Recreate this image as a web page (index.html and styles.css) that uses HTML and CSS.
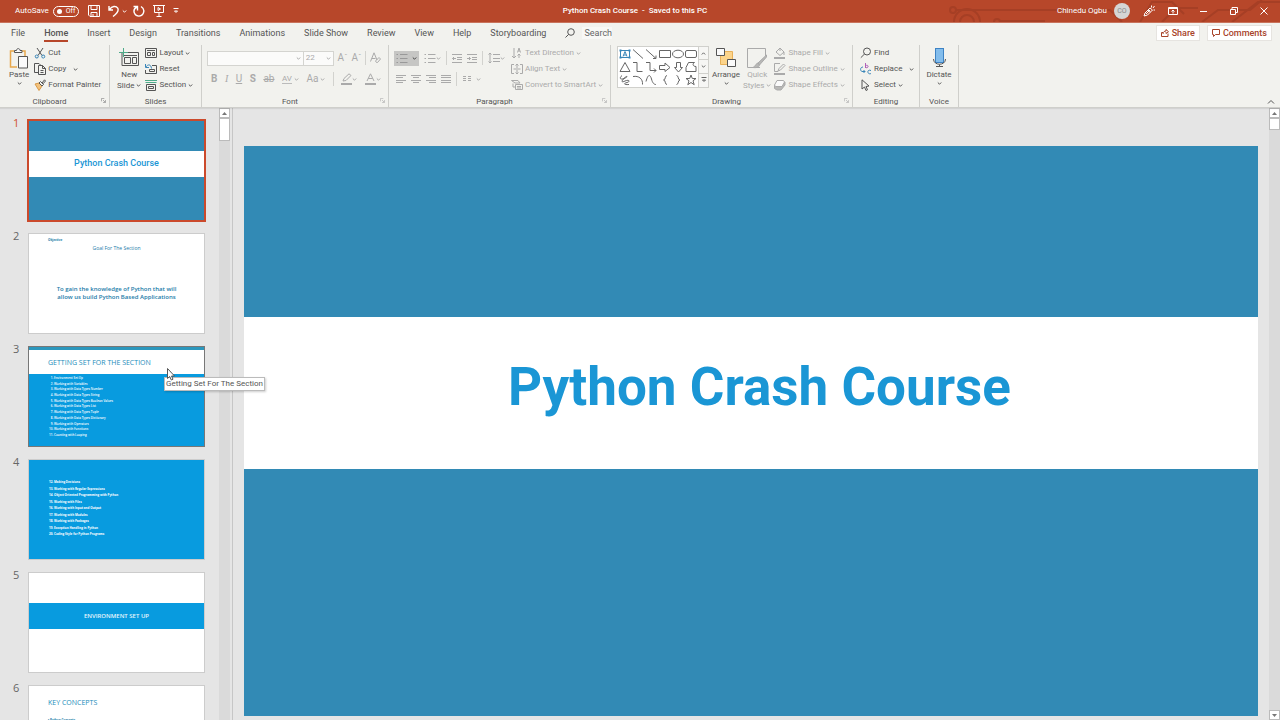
FILE: index.html
```
<!DOCTYPE html>
<html lang="en">
<head>
    <meta charset="UTF-8">
    <meta name="viewport" content="width=device-width, initial-scale=1.0">
    <title>Python Crash Course</title>
    <link rel="stylesheet" href="styles.css">
</head>
<body>
    <svg class="sprite" aria-hidden="true">
        <symbol id="chev" viewBox="0 0 5 5"><path d="M.8 1.5 2.5 3.2 4.2 1.5"/></symbol>
        <symbol id="launch" viewBox="0 0 6 6"><path d="M.5 4V.5H4M2.500 2.500 5 5M5.500 2.500V5.500H2.500"/></symbol>
        <symbol id="bullets" viewBox="0 0 12 12"><path d="M4 2.500H11.500M4 6.500H11.500M4 10.500H11.500M.5 2.500H2M.5 6.500H2M.5 10.500H2"/></symbol>
    </svg>

    <header class="titlebar">
        <svg class="circuit" viewBox="0 0 340 22" aria-hidden="true">
            <path d="M16 10H170L182 22M40 22a13 13 0 0 0-26 0M34 22a7 7 0 0 0-14 0M60 21H105M200 22 212 2H232L244 14M222 22 236 8H258M262 22 278 10H310L322 0M292 22 318 2H340"/>
            <circle cx="13" cy="10" r="3"/><circle cx="57" cy="22" r="3"/>
        </svg>
        <div class="quick">
            <label for="autosave">AutoSave</label>
            <span class="toggle"><input type="checkbox" id="autosave"><span>Off</span></span>
            <button aria-label="Save"><svg width="12" height="12" viewBox="0 0 12 12"><path d="M.5.5H11.500V11.500H2L.5 10ZM3 .5V4.500H9V.5M3 11.500V7.500H9V11.500M5 9V11"/></svg></button>
            <button class="undo" aria-label="Undo"><svg width="12" height="12" viewBox="0 0 12 12"><path class="mid" d="M1 1V5H5M1.500 4.500C4 1 8 .5 9.700 3.200 11.300 6 9 8.500 5 11.500"/></svg><svg class="chev"><use href="#chev"/></svg></button>
            <button aria-label="Redo"><svg width="12" height="12" viewBox="0 0 12 12"><path class="mid" d="M.5 1.500H4.500V5.500M4 2C1 3.500 .5 6 1.500 8.300 3.300 12 8.500 12 10.300 8.300 11.500 5.500 10.500 3 8 1.500"/></svg></button>
            <button aria-label="Start slide show"><svg width="12" height="12" viewBox="0 0 12 12"><path d="M0 .5H12M1.500.5V7.500H10.500V.5M6 7.500V11.500M3.500 11.500H8.500M5 2.500V5.500L7.500 4Z"/></svg></button>
            <button class="custom" aria-label="Customize toolbar"><svg width="6" height="6" viewBox="0 0 6 6"><path d="M.5.5H5.500M1.500 3H4.500L3 4.500Z"/></svg></button>
        </div>
        <h1 class="doc-title">Python Crash Course &nbsp;-&nbsp; Saved to this PC</h1>
        <div class="account">
            <span>Chinedu Ogbu</span>
            <span class="avatar">CO</span>
            <button aria-label="Coming soon"><svg width="12" height="12" viewBox="0 0 12 12"><path d="M1 11 2 8 7 3 9.500 5 4.500 10ZM5 5 7.500 7M8.500 2.500V.5M10 3 11.500 1M10.500 5H12M3 9 7 5"/></svg></button>
            <button aria-label="Ribbon display options"><svg width="10" height="8" viewBox="0 0 10 8"><path d="M.5.5H9.500V7.500H.5ZM.5 1.500H9.500M5 6.500V3M3.500 4.500 5 3 6.500 4.500"/></svg></button>
            <button aria-label="Minimize"><svg width="8" height="8" viewBox="0 0 8 8"><path d="M0 4.500H7"/></svg></button>
            <button aria-label="Restore"><svg width="8" height="8" viewBox="0 0 8 8"><path d="M.5 2.500H5.500V7.500H.5ZM2 2.500V.5H7.500V5.500H5.500"/></svg></button>
            <button aria-label="Close"><svg width="8" height="8" viewBox="0 0 8 8"><path d="M.5.5 7.500 7.500M7.500.5.5 7.500"/></svg></button>
        </div>
    </header>

    <nav class="tabs">
        <button>File</button>
        <button class="active">Home</button>
        <button>Insert</button>
        <button>Design</button>
        <button>Transitions</button>
        <button>Animations</button>
        <button>Slide Show</button>
        <button>Review</button>
        <button>View</button>
        <button>Help</button>
        <button>Storyboarding</button>
        <div class="search">
            <label for="search" aria-label="Search"><svg width="10" height="10" viewBox="0 0 10 10"><circle cx="6" cy="4" r="3.300"/><path d="M3.600 6.400.5 9.500"/></svg></label>
            <input type="text" id="search" placeholder="Search">
        </div>
        <div class="tab-actions">
            <button><svg width="8" height="8" viewBox="0 0 8 8"><path d="M2 3.500H.5V7.500H7V4.500M2 5C2 3 3.500 2 5 2V.5L7.500 2.700 5 4.500V3.200"/></svg>Share</button>
            <button><svg width="8" height="8" viewBox="0 0 8 8"><path d="M.5.5H7.500V5.500H3.500L1.500 7.500V5.500H.5Z"/></svg>Comments</button>
        </div>
    </nav>

    <section class="ribbon">
        <div class="group clipboard">
            <div class="group-body">
                <button class="big"><svg width="20" height="21" viewBox="0 0 20 21"><path class="orange" d="M5 3H1.500V19H8M13 3H16V8"/><path class="paper" d="M5.500 4.500V2.500H7.500C7.500 0 11 0 11 2.500H13V4.500ZM9.500 8.500H18.500V20H9.500Z"/></svg>Paste<svg class="chev"><use href="#chev"/></svg></button>
                <div class="rows">
                    <button><svg width="12" height="12" viewBox="0 0 12 12"><path d="M3 1 8 8.500M9 1 4 8.500"/><path class="blue" d="M2.500 8A1.500 1.500 0 1 0 3 11 1.500 1.500 0 0 0 2.500 8M9 8A1.500 1.500 0 1 0 9.500 11 1.500 1.500 0 0 0 9 8"/></svg>Cut</button>
                    <button><svg width="12" height="12" viewBox="0 0 12 12"><path d="M4 9.500H.5V.5H5L6.500 2M4.500 2.500H8.500L11.500 5.500V11.500H4.500ZM8.500 2.500V5.500H11.500M6.500 7.500H9.500M6.500 9.500H9.500"/></svg>Copy<svg class="chev far"><use href="#chev"/></svg></button>
                    <button><svg width="12" height="12" viewBox="0 0 12 12"><path class="gold" d="M1 5 5 4 8 7 5 11.500Z"/><path d="M5 4 8 7 9.500 5.500 6.500 2.500ZM8 4 10.500.8 11.500 2 9 4.800"/></svg>Format Painter</button>
                </div>
            </div>
            <div class="group-label">Clipboard<svg class="launch"><use href="#launch"/></svg></div>
        </div>

        <div class="group slides">
            <div class="group-body">
                <button class="big"><svg width="20" height="21" viewBox="0 0 20 21"><path d="M3 5V17.500H19.500V4.500H6M4.500 7.500H18M5.500 9.500V15.500H11.500V9.500ZM13.500 9.500V15.500H17.500V9.500Z"/><path class="green" d="M4.500 0V9M0 4.500H9"/></svg>New<span>Slide <svg class="chev"><use href="#chev"/></svg></span></button>
                <div class="rows">
                    <button><svg width="12" height="12" viewBox="0 0 12 12"><path d="M.5 1.500H11.500V10.500H.5ZM2 3.500H10M2.500 5.500H5.500V8.500H2.500ZM7.500 5.500H9.500V8.500H7.500Z"/></svg>Layout<svg class="chev"><use href="#chev"/></svg></button>
                    <button><svg width="12" height="12" viewBox="0 0 12 12"><path d="M7 2.500H11.500V10.500H.5V7M4.500 6.500H9.500V8.500H4.500Z"/><path class="blue" d="M.5 1V4.500H4M.8 4C3 1 6 1 6.500 5.500"/></svg>Reset</button>
                    <button><svg width="12" height="12" viewBox="0 0 12 12"><path class="green" d="M0 1.500H12M.5 3.500H11.500"/><path d="M1.500 5.500H10.500V11.500H1.500ZM3.500 7.500H8.500V9.500H3.500Z"/></svg>Section<svg class="chev"><use href="#chev"/></svg></button>
                </div>
            </div>
            <div class="group-label">Slides</div>
        </div>

        <div class="group font disabled">
            <div class="group-body">
                <div class="line">
                    <span class="combo name"><select aria-label="Font name"><option></option></select><svg class="chev"><use href="#chev"/></svg></span>
                    <span class="combo size"><select aria-label="Font size"><option>22</option></select><svg class="chev"><use href="#chev"/></svg></span>
                    <button class="glyph grow">A<sup>ˆ</sup></button>
                    <button class="glyph grow">A<sup>ˇ</sup></button>
                    <i class="sep"></i>
                    <button aria-label="Clear formatting"><svg width="11" height="12" viewBox="0 0 11 12"><path d="M.5 9.500 4 .8 7 8M1.800 6.500H5.500M5.500 9 9 5.500 10.500 7 7.500 10.500H6.500Z"/></svg></button>
                </div>
                <div class="line format">
                    <button class="glyph"><b>B</b></button>
                    <button class="glyph italic">I</button>
                    <button class="glyph under">U</button>
                    <button class="glyph"><b>S</b></button>
                    <button class="glyph strike">ab</button>
                    <button class="glyph"><span class="spacing">AV</span><svg class="chev"><use href="#chev"/></svg></button>
                    <button class="glyph">Aa<svg class="chev"><use href="#chev"/></svg></button>
                    <i class="sep"></i>
                    <button aria-label="Highlight color"><svg width="11" height="12" viewBox="0 0 11 12"><path d="M2 8 3 5.500 8 .8 10 2.500 5 7.500Z"/><path class="thick" d="M0 11H11"/></svg><svg class="chev"><use href="#chev"/></svg></button>
                    <button aria-label="Font color"><svg width="11" height="12" viewBox="0 0 11 12"><path d="M2 8 5.500.8 9 8M3.300 5.500H7.700"/><path class="thick" d="M0 11H11"/></svg><svg class="chev"><use href="#chev"/></svg></button>
                </div>
            </div>
            <div class="group-label">Font<svg class="launch"><use href="#launch"/></svg></div>
        </div>

        <div class="group paragraph disabled">
            <div class="group-body">
                <div class="lines">
                    <div class="line">
                        <button class="pressed" aria-label="Bullets"><svg width="12" height="12"><use href="#bullets"/></svg><svg class="chev"><use href="#chev"/></svg></button>
                        <button aria-label="Numbering"><svg width="12" height="12"><use href="#bullets"/></svg><svg class="chev"><use href="#chev"/></svg></button>
                        <i class="sep"></i>
                        <button aria-label="Decrease indent"><svg width="10" height="10" viewBox="0 0 10 10"><path d="M0 1.500H10M5 4.500H10M5 6.500H10M0 9.500H10M4 5.500H.5M2 4 .5 5.500 2 7"/></svg></button>
                        <button aria-label="Increase indent"><svg width="10" height="10" viewBox="0 0 10 10"><path d="M0 1.500H10M5 4.500H10M5 6.500H10M0 9.500H10M0 5.500H3.500M2 4 3.500 5.500 2 7"/></svg></button>
                        <i class="sep"></i>
                        <button aria-label="Line spacing"><svg width="12" height="12" viewBox="0 0 12 12"><path d="M5 2.500H12M5 6.500H12M5 9.500H12M2 1V11M.5 2.500 2 1 3.500 2.500M.5 9.500 2 11 3.500 9.500"/></svg><svg class="chev"><use href="#chev"/></svg></button>
                    </div>
                    <div class="line">
                        <button aria-label="Align left"><svg width="10" height="10" viewBox="0 0 10 10"><path d="M0 1.500H10M0 3.500H7M0 6.500H10M0 8.500H7"/></svg></button>
                        <button aria-label="Center"><svg width="10" height="10" viewBox="0 0 10 10"><path d="M0 1.500H10M2 3.500H8M0 6.500H10M2 8.500H8"/></svg></button>
                        <button aria-label="Align right"><svg width="10" height="10" viewBox="0 0 10 10"><path d="M0 1.500H10M3 3.500H10M0 6.500H10M3 8.500H10"/></svg></button>
                        <button aria-label="Justify"><svg width="10" height="10" viewBox="0 0 10 10"><path d="M0 1.500H10M0 3.500H10M0 6.500H10M0 8.500H10"/></svg></button>
                        <i class="sep"></i>
                        <button class="columns" aria-label="Columns"><svg width="10" height="10" viewBox="0 0 10 10"><path d="M1 2.500H4M1 4.500H4M1 6.500H4M6 2.500H9M6 4.500H9M6 6.500H9"/></svg><svg class="chev"><use href="#chev"/></svg></button>
                    </div>
                </div>
                <div class="rows">
                    <button><svg width="12" height="12" viewBox="0 0 12 12"><path d="M3 1V11M1 9 3 11 5 9M6.500 5.500 8 1 9.500 5.500M7 4H9M8 7V11M6.500 8.500 8 7 9.500 8.500"/></svg>Text Direction<svg class="chev"><use href="#chev"/></svg></button>
                    <button><svg width="12" height="12" viewBox="0 0 12 12"><path d="M3 1.500H.5V10.500H3M9 1.500H11.500V10.500H9M2.500 6H9.500M6 1V5M4.500 2.500 6 1 7.500 2.500M6 7V11M4.500 9.500 6 11 7.500 9.500"/></svg>Align Text<svg class="chev"><use href="#chev"/></svg></button>
                    <button><svg width="12" height="12" viewBox="0 0 12 12"><path d="M.5 1.500H7L9 4H4L.5 1.500M2 4.500V8H4M4.500 5.500H11.500V10.500H4.500ZM6 7.500H10M6 9H10"/></svg>Convert to SmartArt<svg class="chev"><use href="#chev"/></svg></button>
                </div>
            </div>
            <div class="group-label">Paragraph<svg class="launch"><use href="#launch"/></svg></div>
        </div>

        <div class="group drawing disabled">
            <div class="group-body">
                <div class="gallery">
                    <div class="shapes">
                        <button aria-label="Text box"><svg class="blue" viewBox="0 0 12 12"><path d="M1.500 2.500H10.500V9.500H1.500ZM4 8.500 6 3.500 8 8.500M4.800 7H7.200"/><path class="thick" d="M.5 2.500H2.500M9.500 2.500H11.500M.5 9.500H2.500M9.500 9.500H11.500"/></svg></button>
                        <button aria-label="Line"><svg viewBox="0 0 12 12"><path d="M1 1.500 11 10.500"/></svg></button>
                        <button aria-label="Arrow"><svg viewBox="0 0 12 12"><path d="M1 1.500 11 10.500M11 7.500V10.500H8"/></svg></button>
                        <button aria-label="Rectangle"><svg viewBox="0 0 12 12"><path d="M.5 2.500H11.500V9.500H.5Z"/></svg></button>
                        <button aria-label="Oval"><svg viewBox="0 0 12 12"><ellipse cx="6" cy="6" rx="5.500" ry="3.800"/></svg></button>
                        <button aria-label="Rounded rectangle"><svg viewBox="0 0 12 12"><rect x=".5" y="2.500" width="11" height="7" rx="1.500"/></svg></button>
                        <button aria-label="Triangle"><svg viewBox="0 0 12 12"><path d="M6 1.500 11 10.500H1Z"/></svg></button>
                        <button aria-label="Elbow"><svg viewBox="0 0 12 12"><path d="M1 1.500H5V10.500H10.500"/></svg></button>
                        <button aria-label="Elbow arrow"><svg viewBox="0 0 12 12"><path d="M1 1.500H5V9.500H11M9 7.500 11 9.500 9 11.500"/></svg></button>
                        <button aria-label="Right arrow"><svg viewBox="0 0 12 12"><path d="M.5 4.500H6V2L11 6.500 6 10.500V8.500H.5Z"/></svg></button>
                        <button aria-label="Down arrow"><svg viewBox="0 0 12 12"><path d="M4.500 1.500H8.500V6.500H10.500L6.500 11 2.500 6.500H4.500Z"/></svg></button>
                        <button aria-label="Freeform"><svg viewBox="0 0 12 12"><path d="M3.500 1.500H9.500C7 3 8 5.500 11 5.500V10.500H1V6.500Z"/></svg></button>
                        <button aria-label="Scribble"><svg viewBox="0 0 12 12"><path d="M3 1.500C0 4 1 6 5 4.500 9 3 9 1 6 3.500 2 7 2 9 6 7 11 5 11 8 8 8.500 4 9.500 5 11 10 10.500"/></svg></button>
                        <button aria-label="Arc"><svg viewBox="0 0 12 12"><path d="M1 2.500C7 1.500 11 5 10.500 10.500"/></svg></button>
                        <button aria-label="Curve"><svg viewBox="0 0 12 12"><path d="M1 7.500C3 0 5 0 6.500 5 7.500 9 9 10.500 11 10.500"/></svg></button>
                        <button aria-label="Left brace"><svg viewBox="0 0 12 12"><path d="M8 1.500C5.500 1.500 7 6 4.500 6 7 6 5.500 10.500 8 10.500"/></svg></button>
                        <button aria-label="Right brace"><svg viewBox="0 0 12 12"><path d="M4.500 1.500C7 1.500 5.500 6 8 6 5.500 6 7 10.500 4.500 10.500"/></svg></button>
                        <button aria-label="Star"><svg viewBox="0 0 12 12"><path d="M6 1 7.300 4.500H11L8 6.800 9.200 10.700 6 8.500 2.800 10.700 4 6.800 1 4.500H4.700Z"/></svg></button>
                    </div>
                    <div class="gallery-nav">
                        <button aria-label="Previous shapes"><svg class="chev up"><use href="#chev"/></svg></button>
                        <button aria-label="Next shapes"><svg class="chev"><use href="#chev"/></svg></button>
                        <button aria-label="More shapes"><svg width="6" height="6" viewBox="0 0 6 6"><path d="M.5.5H5.500M1.500 3 3 4.500 4.500 3Z"/></svg></button>
                    </div>
                </div>
                <button class="big on"><svg width="20" height="21" viewBox="0 0 20 21"><path class="fill-gold" d="M4.500 3.500H16.500V16.500H4.500Z"/><path class="paper" d="M.5.500H8.500V7.500H.5ZM11.500 11.500H19.500V18.500H11.500Z"/></svg>Arrange<svg class="chev"><use href="#chev"/></svg></button>
                <button class="big"><svg width="20" height="21" viewBox="0 0 20 21"><path d="M13 19.500H.5V.5H18.500V8"/><path class="fill-grey" d="M19.500 7 11 15 12.500 17 19.500 9ZM11 15C9 15 9 18 6 19.500 10 20 12.500 19 12.500 17Z"/></svg>Quick<span>Styles <svg class="chev"><use href="#chev"/></svg></span></button>
                <div class="rows">
                    <button><svg width="12" height="12" viewBox="0 0 12 12"><path d="M2 5 6 1 10 5 6 8.500ZM10 5V8M6 1V4"/><path class="thick" d="M0 11H11"/></svg>Shape Fill<svg class="chev"><use href="#chev"/></svg></button>
                    <button><svg width="12" height="12" viewBox="0 0 12 12"><path d="M6 .5H.5V8.500H4M4 8 5 5.500 9.500 1 11 2.500 6.500 7Z"/><path class="thick" d="M0 11H11"/></svg>Shape Outline<svg class="chev"><use href="#chev"/></svg></button>
                    <button><svg width="12" height="12" viewBox="0 0 12 12"><path class="fill-grey" d="M.5 6V9.500L3 11H7L11 6V3Z"/><path class="paper" d="M3 1.500H9.500L10.500 3 8 7.500H1.500L.5 6Z"/></svg>Shape Effects<svg class="chev"><use href="#chev"/></svg></button>
                </div>
            </div>
            <div class="group-label">Drawing<svg class="launch"><use href="#launch"/></svg></div>
        </div>

        <div class="group editing">
            <div class="group-body">
                <div class="rows">
                    <button><svg width="12" height="12" viewBox="0 0 12 12"><circle cx="7" cy="4.500" r="3.500"/><path d="M4.500 7 .8 10.700"/></svg>Find</button>
                    <button><svg width="12" height="12" viewBox="0 0 12 12"><path class="purple" d="M5.500 0V5M5.500 3C7 1.500 8.500 2.500 8 4 7.500 5 6 5 5.500 4"/><path class="blue" d="M3 4C0 4 0 8 2 8.500H5M3.500 7 5 8.500 3.500 10M11 7.500C8.500 6.500 7.500 8 8 9.500 8.500 11 10 11 11 10.500"/></svg>Replace<svg class="chev far"><use href="#chev"/></svg></button>
                    <button><svg width="12" height="12" viewBox="0 0 12 12"><path d="M2 .8V10L4.500 8 6 11.500 7.500 10.800 6 7.500 9 7Z"/></svg>Select<svg class="chev"><use href="#chev"/></svg></button>
                </div>
            </div>
            <div class="group-label">Editing</div>
        </div>

        <div class="group voice">
            <div class="group-body">
                <button class="big"><svg width="20" height="21" viewBox="0 0 20 21"><rect class="mic" x="6.500" y=".5" width="8" height="14"/><path d="M4.500 11C4.500 18 16.500 18 16.500 11M10.500 16.500V18.500M7 18.500H14"/></svg>Dictate<svg class="chev"><use href="#chev"/></svg></button>
            </div>
            <div class="group-label">Voice</div>
        </div>
        <button class="collapse" aria-label="Collapse the ribbon"><svg width="8" height="6" viewBox="0 0 8 6"><path d="M1 4.500 4 1.500 7 4.500"/></svg></button>
    </section>

    <div class="workspace">
        <aside class="panel">
            <ol class="thumbs">
                <li class="selected"><span class="num">1</span>
                    <div class="thumb title-slide"><h2>Python Crash Course</h2></div>
                </li>
                <li><span class="num">2</span>
                    <div class="thumb goal">
                        <small>Objective</small>
                        <h3>Goal For The Section</h3>
                        <p>To gain the knowledge of Python that will<br>allow us build Python Based Applications</p>
                    </div>
                </li>
                <li class="hovered"><span class="num">3</span>
                    <div class="thumb agenda">
                        <h3>GETTING SET FOR THE SECTION</h3>
                        <ol>
                            <li>Environment Set Up</li>
                            <li>Working with Variables</li>
                            <li>Working with Data Types Number</li>
                            <li>Working with Data Types String</li>
                            <li>Working with Data Types Boolean Values</li>
                            <li>Working with Data Types List</li>
                            <li>Working with Data Types Tuple</li>
                            <li>Working with Data Types Dictionary</li>
                            <li>Working with Operators</li>
                            <li>Working with Functions</li>
                            <li>Counting with Looping</li>
                        </ol>
                    </div>
                    <svg class="cursor" width="8" height="13" viewBox="0 0 8 13"><path d="M.5.5V10.500L2.700 8.500 4.300 12 6 11.200 4.500 8H7.500Z"/></svg>
                    <span class="tooltip" role="tooltip">Getting Set For The Section</span>
                </li>
                <li><span class="num">4</span>
                    <div class="thumb agenda more">
                        <ol start="12">
                            <li>Making Decisions</li>
                            <li>Working with Regular Expressions</li>
                            <li>Object Oriented Programming with Python</li>
                            <li>Working with Files</li>
                            <li>Working with Input and Output</li>
                            <li>Working with Modules</li>
                            <li>Working with Packages</li>
                            <li>Exception Handling in Python</li>
                            <li>Coding Style for Python Programs</li>
                        </ol>
                    </div>
                </li>
                <li><span class="num">5</span>
                    <div class="thumb divider"><h2>ENVIRONMENT SET UP</h2></div>
                </li>
                <li><span class="num">6</span>
                    <div class="thumb concepts"><h3>KEY CONCEPTS</h3><small>• Python Concepts</small></div>
                </li>
            </ol>
            <div class="scrollbar">
                <button aria-label="Scroll up"><svg width="5" height="3" viewBox="0 0 5 3"><path d="M0 3 2.500 0 5 3Z"/></svg></button>
                <div class="handle"></div>
            </div>
        </aside>
        <main class="stage">
            <div class="slide title-slide"><h2>Python Crash Course</h2></div>
        </main>
        <div class="scrollbar main-scroll">
            <button aria-label="Scroll up"><svg width="5" height="3" viewBox="0 0 5 3"><path d="M0 3 2.500 0 5 3Z"/></svg></button>
            <div class="handle"></div>
            <button class="down" aria-label="Scroll down"><svg width="5" height="3" viewBox="0 0 5 3"><path d="M0 0 2.500 3 5 0Z"/></svg></button>
        </div>
    </div>
</body>
</html>
```
FILE: styles.css
```
* {
    box-sizing: border-box;
}
body {
    margin: 0;
    height: 100vh;
    display: flex;
    flex-direction: column;
    overflow: hidden;
    background-color: #e5e5e5;
    color: #555;
    font-family: Roboto, "Noto Sans", sans-serif;
    font-size: 8px;
    line-height: 12px;
}
h1, h2, h3, p, ol {
    margin: 0;
    padding: 0;
    font-weight: normal;
}
button, input, select {
    font: inherit;
    color: inherit;
    background: none;
    border: none;
    padding: 0;
    margin: 0;
}
button {
    display: inline-flex;
    align-items: center;
    white-space: nowrap;
}
svg {
    fill: none;
    stroke: currentColor;
    stroke-width: 1;
    flex: none;
}
.sprite {
    position: absolute;
    width: 0;
    height: 0;
}
.chev {
    width: 5px;
    height: 5px;
}
.up {
    transform: rotate(180deg);
}
.mid { stroke-width: 1.4; }
.thick { stroke-width: 2; }
.blue { stroke: #3a86b8; }
.green { stroke: #4dab8a; }
.purple { stroke: #b060b8; }
.orange { stroke: #e8a84c; stroke-width: 1.5; }
.gold { fill: #f3c27c; stroke: #d99a48; }
.fill-gold { fill: #fcd48a; stroke: #e8b058; }
.fill-grey { fill: #b8b8b6; }
.paper { fill: #fafafa; }
.mic { fill: #83bdec; stroke: #3e83c4; }

/* title bar */
.titlebar {
    position: relative;
    display: grid;
    grid-template-columns: 1fr auto 1fr;
    align-items: center;
    height: 23px;
    padding-right: 10px;
    background-color: #b7472a;
    border-bottom: 1px solid #c8735c;
    color: #fff;
}
.circuit {
    position: absolute;
    right: 0;
    top: 0;
    width: 340px;
    height: 22px;
    stroke: #a63f25;
    stroke-width: 2;
}
.quick, .account {
    position: relative;
    display: flex;
    align-items: center;
}
.quick {
    padding-left: 15px;
}
.quick button {
    margin-right: 8px;
}
.quick .undo {
    gap: 2px;
    margin-right: 6px;
}
.toggle {
    display: flex;
    align-items: center;
    gap: 4px;
    width: 26px;
    height: 11px;
    margin: 0 9px 0 4px;
    padding-left: 3px;
    border: 1px solid #fff;
    border-radius: 6px;
    font-size: 7px;
    line-height: 9px;
}
.toggle input {
    appearance: none;
    width: 5px;
    height: 5px;
    border-radius: 50%;
    background-color: #fff;
}
.doc-title {
    font-size: 8px;
    font-weight: 500;
}
.account {
    justify-content: flex-end;
}
.avatar {
    width: 16px;
    height: 16px;
    margin: 0 13px 0 7px;
    border-radius: 50%;
    background-color: #d5d5d5;
    color: #888;
    font-size: 7px;
    line-height: 16px;
    text-align: center;
}
.account button {
    margin-right: 13px;
}
.account button:nth-of-type(n+2) {
    margin-right: 22px;
}
.account button:last-child {
    margin-right: 2px;
}

/* tabs */
.tabs {
    display: flex;
    align-items: center;
    gap: 19px;
    height: 20px;
    padding: 0 8px 0 11px;
    background-color: #f2f2ee;
    font-size: 9px;
}
.tabs button {
    height: 18px;
    border-bottom: 2px solid transparent;
    border-top: 2px solid transparent;
}
.tabs .active {
    border-bottom-color: #b7472a;
    font-weight: 500;
}
.search {
    display: flex;
    align-items: center;
    gap: 7px;
}
.search label {
    display: flex;
}
.search input {
    width: 30px;
    padding-left: 2px;
    background-color: #f8f8f6;
}
.search input::placeholder {
    color: #666;
}
.tab-actions {
    display: flex;
    gap: 7px;
    margin-left: auto;
}
.tab-actions button {
    gap: 3px;
    height: 16px;
    padding: 0 4px;
    border: 1px solid #e6e4e0;
    background-color: #fff;
    color: #a8442a;
    font-weight: 500;
}

/* ribbon */
.ribbon {
    position: relative;
    z-index: 1;
    display: flex;
    height: 65px;
    padding-top: 2px;
    background-color: #f2f2ee;
    border-bottom: 1px solid #cfcfcb;
    box-shadow: 0 1px 1px rgba(0, 0, 0, 0.08);
}
.group {
    display: flex;
    flex-direction: column;
    flex: none;
    border-right: 1px solid #cfcfcb;
}
.group-body {
    display: flex;
    flex: 1;
}
.group-label {
    position: relative;
    height: 12px;
    line-height: 13px;
    color: #555;
    text-align: center;
    padding-right: 10px;
}
.launch {
    position: absolute;
    right: 3px;
    bottom: 4px;
    width: 5px;
    height: 5px;
    stroke: #999;
}
.disabled .launch {
    stroke: #bbb;
}
.rows {
    display: flex;
    flex-direction: column;
}
.rows button {
    height: 16px;
    gap: 2px;
}
.rows .far {
    margin-left: 5px;
}
.big {
    flex-direction: column;
    align-items: center;
    padding-top: 3px;
}
.big span {
    line-height: 10px;
}
.clipboard {
    width: 110px;
}
.clipboard .group-body {
    padding-left: 9px;
    gap: 5px;
}
.slides {
    width: 92px;
}
.slides .group-body {
    padding-left: 7px;
    gap: 4px;
}
.disabled {
    color: #aaa;
}
.line {
    display: flex;
    align-items: center;
    height: 16px;
}
.sep {
    width: 1px;
    height: 14px;
    background-color: #d2d2ce;
}
.font {
    width: 187px;
}
.font .group-body {
    flex-direction: column;
    gap: 5px;
    padding: 5px 7px 0 5px;
}
.font .line {
    justify-content: space-between;
}
.font .format {
    padding: 0 0 0 4px;
}
.combo {
    display: flex;
    align-items: center;
    height: 15px;
    padding-right: 2px;
    border: 1px solid #d4d4d0;
    background-color: #fbfbfa;
}
.combo select {
    appearance: none;
    flex: 1;
    min-width: 0;
    padding-left: 2px;
}
.name {
    width: 97px;
}
.size {
    width: 31px;
    margin-left: -5px;
}
.glyph {
    gap: 2px;
    font-size: 10px;
}
.grow {
    gap: 0;
}
.grow sup {
    font-size: 8px;
    line-height: 8px;
}
.italic { font-style: italic; font-family: "Liberation Serif", serif; }
.under { text-decoration: underline; }
.strike { text-decoration: line-through; }
.spacing {
    font-size: 8px;
    line-height: 9px;
    border-bottom: 1px solid #bbb;
}
.paragraph {
    width: 222px;
}
.paragraph .group-body {
    padding-left: 5px;
}
.lines {
    display: flex;
    flex-direction: column;
    gap: 5px;
    width: 117px;
    padding-top: 5px;
}
.lines .line {
    gap: 5px;
}
.lines .line + .line {
    padding-left: 2px;
}
.lines .columns {
    gap: 4px;
}
.lines .pressed {
    height: 15px;
    padding: 0 2px;
    gap: 4px;
    background-color: #c6c6c4;
    color: #999;
}
.pressed .chev {
    color: #444;
}
.drawing {
    width: 242px;
}
.drawing .group-body {
    padding-left: 6px;
    gap: 3px;
}
.gallery {
    display: flex;
    width: 92px;
    height: 42px;
    margin-top: 1px;
    border: 1px solid #d0d0cc;
    background-color: #fff;
    color: #666;
}
.shapes {
    flex: 1;
    display: grid;
    grid-template-columns: repeat(6, 1fr);
}
.shapes button {
    justify-content: center;
}
.shapes svg {
    width: 12px;
    height: 12px;
}
.gallery-nav {
    display: grid;
    width: 10px;
    border-left: 1px solid #d0d0cc;
}
.gallery-nav button {
    justify-content: center;
    background-color: #f6f6f4;
}
.gallery-nav button + button {
    border-top: 1px solid #d0d0cc;
}
.on {
    color: #555;
}
.editing {
    width: 67px;
}
.editing .group-body {
    padding-left: 7px;
}
.voice {
    width: 39px;
}
.voice .group-body {
    justify-content: center;
}
.slides .group-label, .editing .group-label, .voice .group-label {
    padding-right: 0;
}
.collapse {
    align-self: flex-end;
    margin: 0 5px 2px auto;
}

/* workspace */
.workspace {
    flex: 1;
    min-height: 0;
    display: flex;
    overflow: hidden;
}
.panel {
    display: flex;
    width: 233px;
    border-right: 1px solid #c6c6c6;
}
.thumbs {
    flex: 1;
    list-style: none;
    padding: 12px 0 0 13px;
}
.thumbs > li {
    position: relative;
    display: flex;
    height: 101px;
    margin-bottom: 12px;
}
.num {
    width: 15px;
    font-family: "Open Sans", sans-serif;
    font-size: 11px;
    line-height: 6px;
    color: #666;
}
.thumb {
    width: 177px;
    height: 101px;
    border: 1px solid #ccc;
    background-color: #fff;
    color: #1a7ba8;
    font-family: "Open Sans", sans-serif;
}
.thumb h3 {
    font-size: 7px;
    line-height: 10px;
}
.thumb small {
    font-size: 3px;
    line-height: 4px;
}
.selected .num {
    color: #d0502f;
}
.selected .thumb {
    border-color: #f4d4cc;
    outline: 2px solid #cb4a2c;
    outline-offset: -1px;
}
.title-slide {
    display: grid;
    grid-template-rows: 45fr 40fr 65fr;
    background-color: #328ab5;
}
.title-slide h2 {
    grid-row: 2;
    display: flex;
    align-items: center;
    justify-content: center;
    background-color: #fff;
    color: #1a96d5;
    font-family: Roboto, sans-serif;
    font-weight: 700;
}
.thumb.title-slide h2 {
    padding-bottom: 2px;
    font-size: 9px;
    font-weight: 500;
}
.goal {
    text-align: center;
}
.goal small {
    display: block;
    padding: 4px 0 0 19px;
    font-weight: 700;
    text-align: left;
}
.goal h3 {
    padding-top: 1px;
    font-size: 5px;
}
.goal p {
    padding-top: 32px;
    font-size: 6px;
    font-weight: 600;
    line-height: 8px;
}
.hovered .thumb {
    border-color: #777;
}
.thumb.agenda {
    background-color: #089bdf;
}
.agenda h3 {
    height: 27px;
    padding: 8px 0 0 19px;
    border-top: 3px solid #2b97bd;
    background-color: #fff;
    color: #1a8cba;
}
.agenda ol {
    display: grid;
    height: 62px;
    margin: 2px 0 0 25px;
    color: #fff;
    font-size: 3px;
    line-height: 5px;
    align-content: space-between;
}
.hovered .agenda ol {
    font-weight: 600;
}
.agenda.more ol {
    height: 57px;
    margin-top: 20px;
    font-weight: 700;
}
.cursor {
    position: absolute;
    left: 154px;
    top: 22px;
    z-index: 2;
    fill: #fff;
    stroke: #555;
}
.tooltip {
    position: absolute;
    left: 151px;
    top: 31px;
    z-index: 1;
    height: 14px;
    padding: 0 1px;
    border: 1px solid #bbb;
    background-color: #fff;
    box-shadow: 1px 1px 2px rgba(0, 0, 0, 0.2);
    color: #555;
    white-space: nowrap;
}
.divider {
    display: grid;
    grid-template-rows: 30% 27% 43%;
}
.divider h2 {
    grid-row: 2;
    background-color: #089bdf;
    color: #e6f6fd;
    font-size: 6px;
    font-weight: 600;
    line-height: 26px;
    text-align: center;
}
.concepts {
    padding: 12px 19px;
}
.concepts h3 {
    color: #1a8cba;
}
.concepts small {
    display: block;
    padding-top: 10px;
    font-weight: 700;
}
.scrollbar {
    display: flex;
    flex-direction: column;
    width: 11px;
    margin-right: 2px;
    background-color: #dadada;
}
.scrollbar button {
    justify-content: center;
    height: 10px;
    border: 1px solid #bbb;
    background-color: #fff;
}
.scrollbar svg {
    fill: #777;
    stroke: none;
}
.handle {
    height: 23px;
    border: 1px solid #bbb;
    background-color: #fff;
}
.stage {
    flex: 1;
    padding: 38px 11px 0;
}
.slide {
    aspect-ratio: 16 / 9;
}
.slide h2 {
    padding: 0 0 12px 17px;
    font-size: 53px;
}
.main-scroll {
    margin-right: 0;
}
.main-scroll .handle {
    height: 12px;
}
.main-scroll .down {
    margin-top: auto;
}
```
